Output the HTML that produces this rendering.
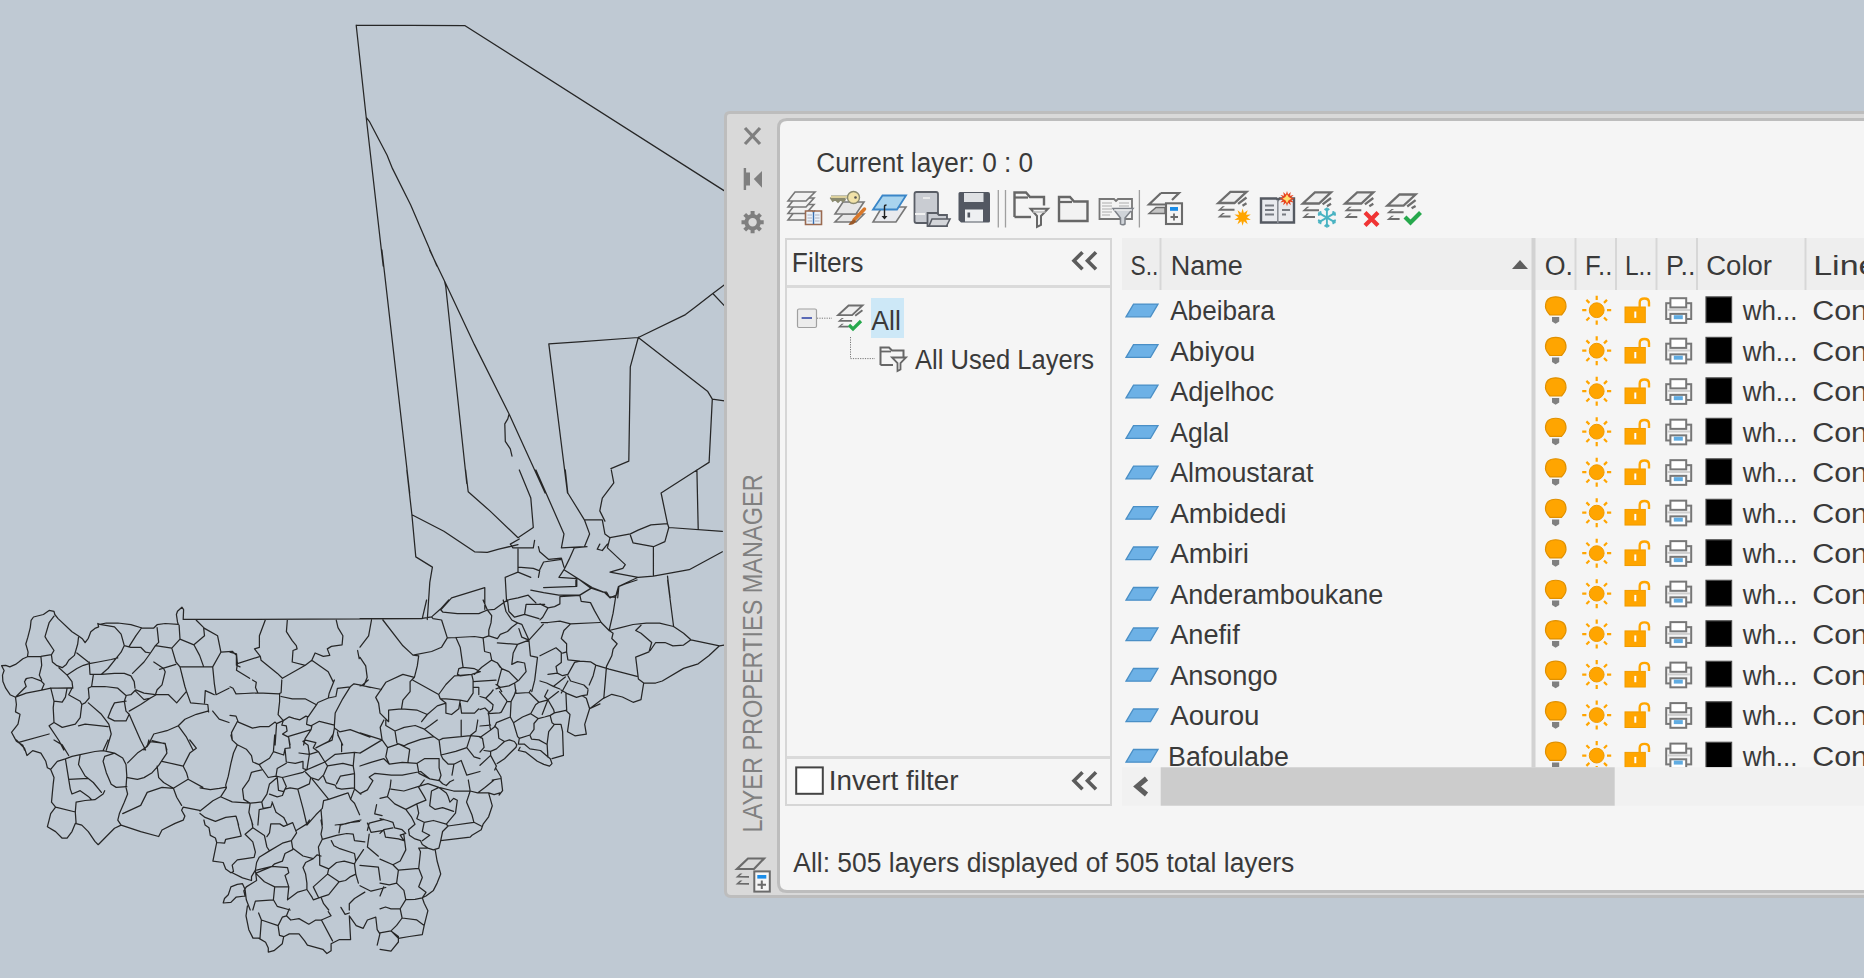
<!DOCTYPE html><html><head><meta charset="utf-8"><style>html,body{margin:0;padding:0;width:1864px;height:978px;overflow:hidden;background:#bfc9d3}svg text{font-family:"Liberation Sans",sans-serif}</style></head><body><svg width="1864" height="978" viewBox="0 0 1864 978" style="position:absolute;left:0;top:0">
<rect width="1864" height="978" fill="#bfc9d3"/>
<g fill="none" stroke="#262626" stroke-width="1.25" stroke-linejoin="round" stroke-linecap="round">
<path d="M240.0,619.4 183.2,619.4 183.6,609.6 181.9,607.2 177.5,611.3 176.4,614.5 177.5,621.9 178.3,624.4 M178.3,624.4 165.2,623.5 157.1,624.7 153.8,628.0 142.0,628.0 130.9,624.7 117.8,623.0 106.3,623.0 99.8,624.4 97.8,623.5 98.7,626.8 94.9,628.4 90.8,631.7 88.3,638.3 85.1,642.7 82.6,639.1 79.3,636.6 72.0,631.7 58.1,618.6 54.8,614.5 54.0,611.3 49.1,610.4 43.4,614.5 33.5,617.0 31.1,620.3 30.3,627.6 27.8,637.4 25.8,644.0 27.0,648.1 28.1,652.2 27.5,656.7 22.9,658.7 18.8,662.0 15.5,664.4 9.8,666.9 5.7,665.3 1.6,665.6 2.9,668.2 4.1,670.5 2.5,675.1 2.9,681.6 5.7,688.2 10.1,694.7 15.5,697.2 16.4,704.5 15.5,711.9 20.0,714.3 18.0,724.2 15.5,727.4 11.5,732.3 14.7,738.1 16.4,741.3 22.9,745.4 24.5,750.0 M27.5,656.7 40.9,656.3 51.5,654.6 54.0,650.5 47.4,640.7 45.0,636.6 49.1,622.7 54.0,616.2 M51.5,655.4 52.4,662.0 56.4,665.3 62.2,667.7 66.3,664.4 68.7,660.3 74.4,655.4 77.7,644.0 78.5,637.4 M40.9,656.3 41.7,665.3 39.3,675.1 41.7,680.0 M15.5,697.2 26.2,693.1 41.7,690.1 50.7,688.2 57.3,688.2 72.0,687.8 M25.4,679.2 27.0,678.3 31.9,677.5 40.9,680.8 44.2,684.1 41.7,689.8 M26.2,679.2 24.5,681.6 26.2,686.5 22.9,689.8 16.4,696.3 M58.9,667.7 67.1,675.1 72.0,681.6 72.8,688.2 M72.0,688.2 68.7,694.7 71.2,696.3 80.2,701.2 81.8,704.5 M50.7,687.8 52.4,694.7 54.0,701.2 53.2,707.8 54.0,722.5 49.1,725.8 M54.0,701.2 62.2,702.1 65.4,697.2 67.1,688.2 M67.1,675.1 76.9,668.5 83.4,665.3 89.2,663.6 M89.2,662.0 90.0,674.3 M89.2,663.6 98.2,662.0 111.2,659.5 117.8,657.9 M76.9,653.0 88.3,662.0 M90.0,674.3 101.4,674.3 114.5,673.4 124.3,673.4 130.9,675.9 134.2,681.6 135.0,688.2 M101.4,674.3 108.0,668.5 114.5,660.3 121.1,652.2 124.3,645.6 M124.3,645.6 130.9,647.3 140.7,647.3 145.6,652.2 150.5,653.0 M124.3,645.6 121.1,634.2 114.5,626.8 99.8,624.4 M129.2,646.4 135.8,635.8 141.5,628.0 M150.5,653.0 155.4,645.6 158.7,642.4 157.1,627.6 M155.4,645.6 171.8,648.1 180.0,639.1 179.1,625.2 M150.5,653.0 144.0,662.0 132.5,673.4 M153.8,662.0 163.6,668.5 165.2,671.8 162.0,684.9 157.1,689.8 155.4,694.7 M180.0,639.1 193.9,644.8 204.5,635.8 203.7,628.4 M193.9,644.8 199.6,655.4 203.7,666.9 M180.0,666.9 203.7,666.9 212.7,666.9 M171.8,648.1 175.9,662.0 180.0,666.9 M159.5,669.3 175.9,664.4 M180.0,666.9 184.9,686.5 186.5,691.4 190.6,702.9 207.8,704.5 208.6,711.9 M212.7,666.9 220.9,652.2 217.6,635.8 204.5,628.4 196.3,620.3 M220.9,652.2 232.3,651.3 236.4,655.4 236.4,665.3 240.0,666.9 M212.7,666.9 214.3,683.3 216.0,694.7 229.0,688.2 M214.3,694.7 211.0,693.1 205.3,690.6 204.5,702.9 M212.7,711.1 219.2,719.2 229.0,722.5 M186.5,691.4 176.7,702.9 168.5,694.7 156.2,694.7 150.5,698.0 144.0,699.6 135.8,691.4 M155.4,694.7 144.0,693.1 135.8,689.8 130.9,694.7 126.0,695.5 117.8,688.2 104.7,686.5 91.6,686.5 88.3,688.2 M91.6,686.5 93.3,675.1 M88.3,688.2 89.2,698.0 85.1,702.9 81.8,704.5 M126.0,696.3 124.3,701.2 126.0,711.1 129.2,714.3 M126.0,701.2 114.5,702.9 111.2,709.4 108.0,717.6 114.5,720.9 126.0,720.9 129.2,714.3 M129.2,711.1 140.7,704.5 150.5,698.0 M129.2,714.3 134.2,725.8 140.7,740.5 145.6,750.0 M88.3,702.9 101.4,714.3 108.8,724.2 111.2,734.0 106.3,750.0 M78.5,725.8 85.1,724.2 108.0,726.6 M54.0,722.5 62.2,727.4 75.3,724.2 80.2,717.6 81.8,704.5 M49.1,725.8 58.9,740.5 63.8,750.0 M19.6,742.1 49.1,734.0 M178.3,725.8 184.9,719.2 196.3,714.3 207.8,711.1 M178.3,725.8 166.9,730.7 153.8,734.0 150.5,740.5 144.0,750.0 M178.3,725.8 186.5,737.2 193.0,750.0 M152.1,740.5 165.2,743.8 166.9,750.0 M240.0,619.4 422.2,618.6 M357.6,650.5 359.2,658.7 M336.3,620.3 338.0,627.6 342.9,635.8 342.1,644.8 331.4,646.4 327.3,648.9 329.8,655.4 323.3,656.3 315.1,653.0 311.8,660.3 305.3,665.3 292.2,662.0 293.0,650.5 297.1,648.9 296.3,645.6 292.2,640.7 286.4,631.7 287.3,620.3 M265.2,620.3 259.4,635.8 259.4,647.3 254.5,648.9 260.3,656.3 261.1,660.3 277.4,673.4 282.4,678.3 M260.3,656.3 237.4,663.6 M230.0,652.2 236.5,653.8 237.4,663.6 236.5,670.2 249.6,678.3 M282.4,678.3 305.3,665.3 M311.8,660.3 328.2,671.8 333.1,681.6 M16.4,740.0 24.5,748.2 27.0,755.5 32.7,750.6 40.9,753.1 45.8,761.3 47.4,767.8 50.7,769.4 54.0,777.6 53.2,784.2 52.4,792.4 51.5,802.2 55.6,807.1 50.7,813.6 49.1,820.2 47.4,826.7 55.6,831.6 62.2,838.2 67.1,838.2 72.0,831.6 75.3,823.4 81.8,825.1 88.3,831.6 94.9,841.4 98.2,844.7 106.3,836.5 114.5,828.3 121.1,825.1 140.7,831.6 158.7,836.5 162.0,830.0 175.1,823.4 183.2,820.2 184.9,816.1 181.6,810.3 183.2,807.1 199.6,810.3 M50.7,769.4 57.3,761.3 65.4,758.8 72.0,756.4 80.2,754.7 94.9,751.5 103.1,750.6 114.5,753.1 122.7,758.0 126.0,764.5 126.8,776.0 126.0,787.4 127.6,794.0 124.3,802.2 119.4,813.6 117.8,820.2 121.1,825.1 M103.1,750.6 108.0,740.0 M65.4,758.8 67.1,769.4 68.7,779.3 70.3,789.1 72.0,794.0 80.2,790.7 88.3,796.4 91.6,799.7 M54.0,740.0 62.2,744.9 68.7,755.5 M80.2,754.7 78.5,764.5 85.1,776.0 93.3,782.5 101.4,792.4 M68.7,779.3 88.3,778.4 M114.5,753.1 104.7,756.4 103.1,761.3 106.3,772.7 111.2,784.2 116.2,787.4 126.8,786.6 M76.1,802.2 85.1,800.5 94.9,799.7 103.1,794.0 104.7,790.7 M76.1,802.2 75.3,812.0 76.1,823.4 M55.6,807.1 75.3,812.0 M127.6,762.9 137.4,753.1 147.2,746.5 148.9,740.0 M147.2,746.5 150.5,741.6 165.2,743.3 166.9,753.1 162.0,760.4 158.7,765.4 152.1,772.7 144.0,777.6 137.4,779.3 127.6,777.6 M162.0,761.3 183.2,766.2 186.5,772.7 188.1,778.4 M183.2,766.2 186.5,759.6 189.8,753.1 196.3,748.2 189.8,740.0 M157.1,766.2 158.7,777.6 163.6,782.5 173.4,788.3 M122.7,813.6 140.7,805.4 147.2,792.4 162.0,787.4 173.4,788.3 188.1,779.3 202.9,787.4 M173.4,788.3 176.7,797.3 181.6,805.4 M247.4,906.0 246.0,915.8 248.8,929.7 253.0,938.1 258.6,938.1 265.6,942.3 268.3,947.9 268.3,952.1 273.9,950.7 282.3,943.7 283.7,936.7 289.3,933.9 299.0,933.9 304.6,940.9 307.4,945.1 322.8,949.3 326.9,953.5 331.1,950.7 331.1,943.7 339.5,939.5 350.6,939.5 349.3,915.8 356.2,925.6 363.2,928.3 367.4,920.0 375.8,917.2 377.2,929.7 379.9,933.9 377.2,945.1 M289.3,908.8 286.5,915.8 282.3,917.2 278.1,925.6 279.5,935.3 283.7,936.7 M258.6,913.0 261.4,920.0 278.1,925.6 M261.4,920.0 260.0,938.1 M286.5,915.8 290.7,920.0 299.0,918.6 308.8,924.2 315.8,920.0 321.4,920.0 331.1,915.8 328.3,911.6 M340.9,907.4 345.1,914.4 349.3,913.0 M321.4,920.0 332.5,940.9 M356.2,25.2 465.1,25.7 724.0,190.6 M356.2,25.2 366.2,117.3 383.2,266.0 M366.2,117.3 369.3,121.3 387.1,155.3 392.4,168.4 410.7,205.0 436.9,266.0 M381.9,250.0 409.7,493.0 M429.6,250.0 444.5,281.1 474.3,344.4 509.1,414.0 545.1,493.0 M444.5,281.1 445.7,286.0 466.8,483.5 M509.1,414.0 507.8,418.9 504.8,423.9 505.3,441.3 510.3,448.8 512.0,456.2 M548.8,343.9 578.6,341.9 638.3,337.5 M548.8,343.9 567.5,493.0 M638.3,337.5 685.5,314.6 695.4,307.1 712.8,293.5 724.5,284.8 M712.8,293.5 724.5,305.9 M638.3,337.5 630.3,366.8 628.8,461.2 610.9,468.6 M638.3,337.5 707.8,391.6 712.3,399.1 724.5,400.8 M712.3,399.1 709.1,462.4 M360.0,618.6 422.3,618.3 M426.6,600.0 422.3,618.3 M422.3,618.3 431.6,616.9 433.0,618.6 441.6,620.0 447.3,637.9 M431.6,616.9 440.2,609.3 448.8,600.0 M440.2,609.3 443.0,612.2 457.4,613.6 478.8,613.6 487.4,610.0 M487.4,610.0 483.1,600.0 M487.4,610.0 494.6,609.3 503.2,602.9 507.5,600.0 M487.4,610.0 491.7,615.7 491.0,622.9 488.8,630.1 488.8,635.8 483.1,637.9 474.5,636.5 455.9,637.5 447.3,637.9 M447.3,637.9 441.6,647.2 431.6,651.5 413.0,655.1 402.9,645.8 382.9,620.0 M371.5,620.0 368.6,635.8 360.0,647.2 M360.0,657.3 365.7,665.9 367.2,677.3 364.3,684.5 360.0,685.9 M360.0,685.2 381.5,689.5 M413.0,655.1 418.7,655.8 417.3,665.9 414.4,677.3 M414.4,677.3 402.9,674.4 385.8,682.3 381.5,688.8 375.7,697.4 378.6,703.1 380.0,713.1 388.6,721.7 M414.4,677.3 410.1,681.6 410.1,691.6 402.9,700.2 401.5,708.8 M413.0,680.2 438.7,694.5 M455.9,637.5 460.2,647.2 463.1,667.3 M463.1,667.3 458.8,668.7 457.4,674.4 460.2,675.9 471.7,674.4 480.3,671.6 474.5,668.7 463.1,667.3 M438.7,694.5 445.9,684.5 454.5,675.9 471.7,674.4 473.1,680.2 473.1,693.1 467.4,701.6 460.2,700.2 445.9,698.8 440.2,698.8 438.7,694.5 M483.1,637.9 484.6,651.5 490.3,653.0 491.7,660.1 497.4,663.0 500.3,667.3 M491.7,660.1 481.7,667.3 474.5,674.4 M473.1,681.6 496.0,680.2 M473.1,687.3 478.8,687.3 478.8,694.5 M497.4,663.0 501.7,668.7 497.4,684.5 501.7,691.6 M488.8,635.8 497.4,638.7 500.3,634.4 507.5,631.5 511.8,627.2 517.5,622.9 521.8,624.3 528.9,640.1 517.5,644.4 497.4,642.9 M528.9,640.1 543.2,624.3 M528.9,640.1 530.4,655.8 537.5,657.3 534.7,680.2 531.8,691.6 M517.5,644.4 513.2,653.0 511.8,664.4 517.5,661.6 524.6,663.0 526.1,671.6 518.9,680.2 514.6,683.0 516.0,693.1 M501.7,668.7 508.9,671.6 517.5,680.2 M496.0,684.5 500.3,687.3 508.9,685.9 514.6,683.0 M496.0,688.8 500.3,687.3 M503.2,600.0 506.0,611.5 511.8,620.0 517.5,622.9 M507.5,600.0 508.9,611.5 514.6,617.2 524.6,614.3 539.0,618.6 M524.6,614.3 526.1,604.3 544.7,604.3 M518.9,628.6 521.8,637.2 528.9,640.1 M440.2,698.8 445.9,703.1 445.9,713.1 451.6,714.5 458.8,708.8 460.2,700.2 M460.2,703.1 461.6,713.1 474.5,713.1 478.8,708.8 M401.5,708.8 417.3,710.2 427.3,714.5 421.6,721.7 M401.5,708.8 388.6,710.2 388.6,721.7 M427.3,714.5 437.3,705.9 445.9,703.1 M667.6,580.0 673.6,626.5 M673.6,626.5 683.6,633.2 690.9,639.8 719.5,645.8 724.0,645.1 M719.5,645.8 708.8,655.8 698.2,663.8 683.6,668.4 662.3,681.0 655.7,683.0 643.7,683.0 638.4,679.0 635.7,657.1 649.0,651.8 651.7,642.5 641.0,633.2 635.7,630.5 641.0,625.2 M690.9,639.8 683.6,645.1 672.9,645.8 665.0,642.5 655.7,642.5 650.3,650.5 M609.1,630.5 619.8,627.9 633.1,624.5 646.4,623.2 659.6,623.2 673.6,626.5 M618.4,586.6 625.1,584.0 637.0,580.0 M618.4,586.6 615.8,596.0 613.1,613.2 609.1,630.5 M615.8,597.3 609.1,596.6 606.5,592.0 602.5,592.0 590.5,588.0 579.9,580.0 M559.9,596.6 579.9,595.3 590.5,588.6 M579.9,595.3 581.2,601.3 590.5,602.6 594.5,610.6 601.2,622.5 609.1,630.5 M559.9,596.6 559.9,603.9 554.6,606.6 548.0,607.9 540.0,603.9 M548.0,607.9 542.7,617.2 540.0,619.9 M541.3,622.5 548.0,622.5 559.9,621.2 570.6,623.9 599.8,622.5 M570.6,623.9 563.9,630.5 561.3,638.5 566.6,643.8 566.6,651.8 562.6,653.1 M566.6,651.8 567.9,659.8 579.9,661.1 590.5,661.8 595.8,665.1 609.1,669.1 637.0,676.4 M609.1,630.5 613.1,633.2 611.8,638.5 617.1,643.8 613.1,649.1 611.8,655.8 606.5,666.4 603.8,698.3 M603.8,698.3 611.8,694.3 622.4,697.0 633.1,702.3 641.0,699.6 643.7,683.0 M595.8,665.1 593.2,675.7 589.2,685.0 M540.0,655.8 556.0,647.8 561.3,652.5 M561.3,653.1 561.3,662.4 556.0,666.4 557.3,673.1 562.6,675.7 567.9,674.4 M567.9,674.4 574.6,662.4 579.9,661.1 M567.9,675.7 570.6,681.0 583.9,685.0 587.9,689.0 M548.0,674.4 557.3,673.1 M540.0,681.0 546.6,683.0 553.3,686.4 559.9,689.0 M553.3,686.4 565.3,677.0 M561.3,693.0 567.9,681.0 M575.9,586.0 575.9,580.0 M406.8,470.0 411.9,514.7 415.8,556.9 432.4,567.1 429.8,582.4 M411.9,514.7 443.9,531.3 474.6,551.8 487.3,552.3 498.8,549.2 518.0,544.6 M465.6,470.0 468.2,491.7 489.9,510.9 518.0,537.7 533.3,527.5 530.8,498.1 519.3,470.0 M519.3,539.0 510.3,544.1 512.9,547.9 533.3,547.9 534.6,540.3 M535.9,470.0 564.0,533.9 561.4,547.9 584.4,546.7 589.6,533.9 584.4,519.8 602.3,519.8 604.9,533.9 610.0,537.7 M565.3,470.0 567.8,493.0 584.4,519.8 M611.3,470.0 613.8,482.8 602.3,498.1 599.8,510.9 604.9,521.1 M610.0,537.7 630.4,533.9 638.1,530.1 650.9,524.9 667.5,523.7 668.8,527.5 722.4,531.3 M696.9,470.0 661.1,493.0 667.5,523.7 M696.9,470.0 698.2,528.8 M630.4,535.2 633.0,542.8 653.4,546.7 664.9,541.6 668.8,527.5 M653.4,546.7 653.4,576.1 M722.4,551.8 689.2,569.7 653.4,576.1 638.1,577.3 610.0,572.2 622.8,568.4 625.3,564.6 607.4,547.9 610.0,537.7 M599.8,544.1 597.2,549.2 602.3,550.5 607.4,544.1 M587.0,546.7 574.2,547.9 569.1,559.4 564.0,569.7 M538.4,546.7 539.7,551.8 548.7,559.4 561.4,558.2 564.0,567.1 M518.0,549.2 518.0,572.2 530.8,577.3 M518.0,567.1 533.3,568.4 539.7,570.9 538.4,577.3 M539.7,569.7 543.6,562.0 561.4,559.4 M564.0,569.7 558.9,577.3 576.8,578.6 576.8,586.3 543.6,587.6 M564.0,569.7 592.1,587.6 604.9,592.7 610.0,597.8 616.4,595.2 618.9,586.3 638.1,577.3 M518.0,572.2 505.2,577.3 M618.9,586.3 617.7,597.8 M667.5,576.1 670.1,597.8 M484.8,587.6 451.6,597.8 441.3,609.3 M484.8,587.6 484.8,609.3 M505.2,577.3 506.5,600.3 M506.5,600.3 518.0,597.8 528.2,595.2 M528.2,595.2 535.9,602.9 M530.8,590.1 543.6,592.7 558.9,595.2 579.3,595.2 592.1,587.6 M429.8,582.4 427.3,619.5 M230.9,735.0 232.2,740.1 237.3,744.7 233.5,753.0 230.9,763.3 228.3,776.2 225.7,785.2 226.4,787.8 220.6,796.8 212.9,800.7 200.0,811.0 M200.0,787.8 210.3,789.7 219.3,788.4 226.4,787.1 M237.3,744.7 246.3,749.2 251.5,755.6 252.8,762.0 259.2,764.6 261.8,768.5 268.2,777.5 276.0,776.2 M259.2,764.6 269.5,758.2 273.4,751.7 274.7,735.0 M273.4,751.7 283.7,755.0 285.0,748.5 290.1,747.9 288.8,738.9 M285.0,748.5 286.3,762.0 295.3,763.3 303.0,761.4 303.0,768.5 306.9,769.8 M276.0,776.2 277.2,768.5 286.3,763.3 M276.0,776.2 282.4,777.5 303.0,772.3 306.9,769.8 315.9,765.9 324.9,762.0 M261.8,769.8 251.5,772.3 248.9,780.1 242.5,789.1 243.8,799.4 250.2,803.2 261.8,801.9 266.9,794.2 269.5,783.9 277.2,777.5 M220.6,796.8 232.2,801.9 250.2,803.2 M250.2,803.2 248.9,812.2 252.8,825.0 M277.2,777.5 278.5,790.4 283.7,791.6 286.3,786.5 282.4,777.5 M283.7,791.6 285.0,789.1 290.1,787.8 297.8,789.1 309.4,783.9 310.7,777.5 305.6,772.3 M297.8,789.1 303.0,808.4 306.9,825.0 M261.8,801.9 263.1,808.4 270.8,807.1 272.1,803.2 M272.1,801.9 276.0,812.2 283.7,817.4 287.5,825.0 M269.5,794.2 277.2,796.8 282.4,795.5 285.0,789.1 M257.9,825.0 259.2,809.7 270.8,807.1 M306.9,769.8 309.4,754.3 308.1,745.3 303.0,741.4 M299.1,753.0 309.4,754.3 318.4,751.7 M303.0,741.4 305.6,740.1 315.9,742.7 313.3,747.9 318.4,751.7 M315.9,747.9 328.7,741.4 332.6,735.0 M318.4,751.7 324.9,762.0 327.5,765.9 323.6,774.9 318.4,780.1 310.7,777.5 M324.9,762.0 335.2,754.3 354.5,752.4 359.6,753.0 M337.8,735.0 341.6,742.7 341.6,751.7 M354.5,752.4 353.2,765.9 354.5,773.6 354.5,789.1 360.9,794.2 M327.5,765.9 342.9,763.3 353.2,765.9 M323.6,776.2 326.2,782.6 335.2,785.2 336.5,787.8 341.6,789.1 354.5,787.8 M336.5,783.9 340.3,776.2 354.5,773.6 M312.0,778.8 328.7,799.4 344.2,794.2 348.1,792.9 350.6,799.4 354.5,803.2 359.6,814.8 M328.7,799.4 323.6,800.7 322.3,808.4 315.9,814.8 306.9,825.0 M321.0,809.7 322.3,825.0 M354.5,789.1 350.6,799.4 M200.0,813.5 205.1,817.4 215.4,821.3 225.7,817.4 236.0,816.1 238.6,825.0 M335.2,825.0 345.5,823.8 354.5,821.3 360.9,820.0 M203.9,820.0 205.1,825.1 209.0,827.7 210.3,835.4 215.4,838.0 216.7,842.5 224.5,843.2 225.7,839.3 241.2,836.1 238.6,826.4 237.3,820.0 M216.7,842.5 212.9,861.2 223.2,862.5 225.7,868.9 230.9,872.8 233.5,871.5 232.2,865.1 237.3,859.9 254.1,857.3 255.4,852.2 252.8,841.9 245.1,834.2 252.8,827.7 251.5,820.0 M252.8,827.7 264.4,835.4 266.9,847.0 269.5,850.9 259.2,857.3 256.6,862.5 255.4,870.2 251.5,876.6 251.5,880.5 242.5,877.9 232.2,872.8 M269.5,850.9 282.4,843.2 291.4,840.6 296.6,832.9 292.7,822.6 283.7,826.4 279.8,823.9 270.8,823.9 269.5,832.9 266.9,836.7 M296.6,830.3 306.9,823.9 309.4,820.0 M291.4,840.6 292.7,848.3 303.0,856.0 313.3,858.6 317.2,854.8 321.0,856.0 M292.7,849.6 285.0,853.5 282.4,861.2 274.7,863.8 272.1,866.3 256.6,870.2 M256.6,872.8 272.1,866.3 287.5,867.6 288.8,872.8 285.0,875.4 288.8,886.9 287.5,899.8 M256.6,874.1 264.4,881.8 274.7,886.9 288.8,886.9 M255.4,870.2 256.6,880.5 246.3,886.9 243.8,890.8 245.1,896.0 M245.1,889.5 242.5,883.7 237.3,884.4 230.9,886.9 228.3,894.7 224.5,898.5 223.2,903.0 230.9,902.4 236.0,897.2 245.1,896.0 M245.1,889.5 246.3,899.8 250.2,910.0 M252.8,910.0 255.4,901.1 273.4,899.8 274.7,886.9 M273.4,899.8 277.2,906.3 290.1,910.0 M287.5,899.8 297.8,892.1 306.9,889.5 312.0,897.2 313.3,899.8 321.0,897.2 M313.3,858.6 305.6,862.5 303.0,867.6 305.6,874.1 306.9,883.1 306.9,889.5 M321.0,820.0 322.3,827.7 321.0,834.2 322.3,839.3 318.4,847.0 319.7,857.3 319.7,865.1 328.7,868.9 M322.3,839.3 336.5,835.4 346.8,833.5 353.2,834.2 354.5,840.6 364.8,841.9 M363.5,849.6 355.8,861.2 354.5,863.8 M331.3,840.6 333.9,845.7 339.0,848.3 354.5,853.5 355.8,861.2 M328.7,868.9 327.5,874.1 313.3,886.9 318.4,897.2 M327.5,874.1 339.0,881.8 345.5,880.5 350.6,876.6 355.8,874.1 354.5,863.8 344.2,861.2 336.5,862.5 328.7,868.9 M321.0,897.2 328.7,894.7 339.0,881.8 M321.0,897.2 323.6,903.7 328.7,910.0 M355.8,874.1 358.4,883.1 M364.8,892.1 354.5,898.5 349.3,903.7 349.3,910.0 M339.0,832.9 340.3,825.1 349.3,822.6 359.6,821.3 M495.7,768.0 500.9,776.7 502.6,790.7 499.1,795.0 M492.2,780.2 500.9,778.5 M480.0,696.5 485.7,698.2 493.1,704.7 492.3,709.6 488.2,712.9 489.0,716.2 489.8,726.0 490.6,730.1 M485.7,698.2 490.6,693.3 493.1,690.0 M499.6,691.6 506.2,699.8 507.0,701.5 511.1,701.5 M507.0,701.5 501.3,712.1 499.6,712.9 488.2,713.7 M511.1,701.5 514.4,694.9 516.0,690.0 M516.0,693.3 529.1,692.5 530.7,690.0 M529.1,692.5 538.9,702.3 M511.1,701.5 510.3,717.0 513.5,722.7 517.6,736.6 519.3,738.3 518.4,744.0 M480.0,726.0 490.6,725.2 M480.0,709.6 484.9,708.0 488.2,711.3 M510.3,717.0 496.4,722.7 494.7,726.8 490.6,730.1 480.0,737.4 M494.7,726.0 498.0,729.3 498.8,738.3 504.5,741.5 M513.5,722.7 522.5,717.0 530.7,713.7 538.1,718.6 M530.7,713.7 535.6,704.7 538.9,702.3 547.9,699.8 M547.9,699.8 558.5,691.6 M547.9,699.8 544.6,696.5 547.9,690.0 M547.9,699.8 542.2,714.5 M547.9,699.8 553.6,709.6 554.4,712.9 565.9,710.4 M538.1,718.6 544.6,717.0 550.3,715.4 554.4,712.9 M538.1,718.6 534.0,723.5 534.0,729.3 529.9,735.0 519.3,738.3 M529.9,735.0 531.5,739.1 538.9,739.9 546.3,744.0 M550.3,716.2 552.0,722.7 554.4,724.4 548.7,731.7 547.1,744.0 547.9,757.1 M554.4,724.4 561.0,724.4 562.6,731.7 563.4,755.4 552.0,758.7 M565.9,710.4 570.0,714.5 567.5,731.7 574.9,735.8 586.3,734.2 584.7,724.4 589.6,708.8 586.3,698.2 582.2,695.7 576.5,697.4 566.7,693.3 561.0,690.0 M565.9,693.3 566.7,710.4 M589.6,708.8 600.0,703.9 M582.2,695.7 587.2,694.9 588.0,690.0 M480.0,737.4 482.5,738.3 484.1,747.3 480.0,752.2 M484.1,750.5 490.6,751.3 496.4,748.9 504.5,741.5 509.4,739.9 514.4,741.5 516.8,744.8 M490.6,751.3 490.6,755.4 496.4,766.1 494.7,770.0 M490.6,755.4 480.0,765.3 M516.8,744.8 516.0,747.3 509.4,753.8 504.5,758.7 497.2,763.6 M519.3,744.0 524.2,744.0 529.9,748.9 540.5,750.5 546.3,755.4 550.3,758.7 552.0,763.6 549.5,766.1 543.8,764.4 537.3,761.2 525.8,752.2 518.4,750.5 520.1,747.3 M709.0,462.4 697.0,470.0 M360.0,732.9 382.1,739.9 M360.0,753.1 382.1,739.9 M382.1,739.9 380.2,727.4 383.9,720.0 M382.1,739.9 387.6,747.6 385.8,756.8 389.4,764.2 M360.0,766.0 371.0,762.3 383.9,758.7 389.4,764.2 M389.4,764.2 402.3,762.3 417.1,763.3 424.4,758.7 439.1,758.7 M387.6,747.6 398.7,743.9 404.2,745.8 407.9,743.9 420.7,739.3 433.6,736.6 439.1,740.2 441.0,755.0 442.8,758.7 M396.8,743.0 409.7,749.4 407.9,762.3 M385.8,720.0 385.8,725.5 395.0,731.0 396.8,742.1 M395.0,731.0 404.2,727.4 415.2,725.5 424.4,729.2 433.6,736.6 M424.4,729.2 429.9,725.5 437.3,720.0 M439.1,740.2 442.8,738.4 461.2,736.6 470.4,735.6 480.0,736.6 M461.2,736.6 461.2,720.0 M470.4,735.6 476.0,731.0 477.8,720.0 M466.8,747.6 474.1,756.8 480.0,758.7 M441.0,755.0 455.7,751.3 466.8,747.6 470.4,736.6 M442.8,758.7 448.3,764.2 453.9,764.2 452.0,775.2 M453.9,764.2 461.2,760.5 466.8,775.2 M466.8,775.2 480.0,771.5 M417.1,763.3 418.9,773.4 429.9,778.9 439.1,780.7 441.0,775.2 439.1,767.9 439.1,758.7 M360.0,793.6 367.4,789.9 372.9,780.7 369.2,777.1 374.7,773.4 391.3,775.2 M391.3,775.2 402.3,775.2 420.7,771.5 429.9,778.9 M376.6,804.7 374.7,813.9 382.1,815.7 M383.9,819.4 369.2,823.1 367.4,830.4 M367.4,823.1 371.0,832.3 383.9,830.4 M369.2,834.1 367.4,847.0 378.4,856.2 M360.0,865.4 378.4,867.2 M378.4,867.2 380.2,880.1 M360.0,885.7 371.0,891.2 385.8,887.5 M391.0,780.0 390.1,787.4 387.4,796.6 380.0,798.4 M387.4,796.6 394.7,803.9 405.8,809.4 416.8,803.9 426.0,800.2 424.2,796.6 418.7,787.4 424.2,780.0 M391.0,789.2 403.9,791.0 418.7,786.4 M418.7,786.4 427.9,783.7 438.9,787.4 453.6,791.0 470.2,791.0 468.3,780.0 M438.9,780.0 442.6,783.7 446.3,785.5 449.9,781.8 453.6,780.0 M470.2,791.0 477.6,792.9 488.6,792.9 494.1,794.7 500.0,792.9 M477.6,792.9 484.9,787.4 494.1,780.0 M488.6,792.9 492.3,805.8 488.6,816.8 483.1,824.2 481.2,829.7 472.0,835.2 470.2,837.1 440.7,840.7 438.9,848.1 433.4,849.9 427.9,848.1 422.3,844.4 420.5,840.7 415.0,838.9 409.4,835.2 408.5,829.7 415.0,824.2 411.3,816.8 405.8,809.4 M426.0,800.2 416.8,803.9 418.7,813.1 416.8,818.7 424.2,822.3 433.4,820.5 446.3,824.2 455.5,813.1 457.3,800.2 453.6,798.4 449.9,802.1 448.1,796.6 446.3,792.9 438.9,787.4 431.5,791.0 429.7,805.8 435.2,809.4 442.6,807.6 453.6,811.3 M470.2,791.0 466.5,802.1 472.0,815.0 473.9,822.3 481.2,826.0 M473.9,822.3 448.1,826.0 446.3,824.2 M424.2,822.3 422.3,831.5 429.7,835.2 422.3,840.7 M448.1,826.0 442.6,831.5 440.7,840.7 M380.0,818.7 387.4,820.5 392.9,822.3 394.7,827.9 402.1,829.7 405.8,833.4 400.2,835.2 403.9,840.7 M380.0,833.4 383.7,829.7 392.9,827.9 M383.7,829.7 385.5,837.1 398.4,838.9 403.9,840.7 M403.9,835.2 405.8,849.9 400.2,861.0 392.9,864.7 380.0,859.1 M392.9,864.7 398.4,870.2 418.7,868.3 420.5,851.8 418.7,848.1 427.9,848.1 M398.4,870.2 396.6,883.1 403.9,890.4 405.8,899.6 400.2,908.8 M418.7,868.3 422.3,877.6 418.7,886.8 426.0,892.3 422.3,897.8 M435.2,849.9 437.1,861.0 440.7,873.9 437.1,883.1 433.4,890.4 426.0,896.0 422.3,897.8 M380.0,883.1 389.2,884.9 396.6,883.1 M383.7,886.8 380.0,896.0 M405.8,899.6 415.0,899.3 422.3,897.8 424.2,903.3 427.9,910.7 424.2,925.4 422.3,934.6 409.4,936.5 398.4,938.3 391.0,930.9 M380.0,908.8 385.5,907.0 391.0,908.8 400.2,908.8 402.1,918.0 416.8,919.9 424.2,925.4 M402.1,918.0 396.6,925.4 391.0,930.9 380.0,932.8 M391.0,930.9 398.4,936.5 398.4,942.0 391.0,951.2 380.0,949.3 M230.0,686.8 233.0,688.3 236.0,693.9 245.0,693.5 257.8,692.8 278.8,693.9 281.1,692.8 281.8,680.0 M252.5,680.0 256.3,682.3 255.5,687.5 257.8,692.8 M279.6,693.9 279.6,701.8 278.1,714.6 283.3,720.6 M281.1,696.5 292.3,698.8 305.1,698.8 316.4,704.8 317.9,702.5 328.4,698.0 335.9,696.5 337.4,688.3 350.2,686.8 353.9,683.8 362.2,685.3 368.2,680.0 M350.2,686.8 342.7,698.8 335.2,713.0 334.4,725.1 334.4,728.1 M328.4,697.3 329.1,693.5 334.4,680.0 M362.2,685.3 370.0,687.5 M316.4,704.8 308.1,716.8 305.9,716.1 299.9,719.8 293.8,718.3 289.3,716.8 283.3,720.6 276.6,723.6 M307.4,717.6 306.6,724.3 311.1,725.8 319.4,721.3 334.4,725.1 M230.0,715.3 236.0,716.1 238.3,722.1 252.5,728.1 260.0,726.6 269.1,726.6 275.1,722.1 276.6,723.6 M237.5,721.3 231.5,732.6 232.3,740.1 237.5,745.0 M276.6,723.6 275.1,745.0 M283.3,720.6 281.8,725.1 286.3,725.8 287.1,731.1 282.6,734.1 288.6,737.1 290.1,745.0 M288.6,736.3 311.1,729.6 311.9,725.8 M311.1,729.6 305.1,738.6 303.6,745.0 M334.4,728.1 339.7,731.8 350.2,729.6 370.0,737.1 M334.4,728.1 332.1,740.1 321.6,745.0 M337.4,731.8 338.2,735.6 342.7,745.0 M604.4,697.5 590.0,708.4"/>
</g>
<path d="M1870 112.5 H730 Q725.5 112.5 725.5 117 V891 Q725.5 896.5 731 896.5 H1870" fill="#d9d9d9" stroke="#bdbdbd" stroke-width="3"/>
<path d="M1870 119.5 H787 Q778.5 119.5 778.5 128 V883 Q778.5 891.5 787 891.5 H1870" fill="#f5f5f5" stroke="#bdbdbd" stroke-width="3"/>
<path d="M745 128 L760 144 M760 128 L745 144" stroke="#7f7f7f" stroke-width="3.2"/>
<rect x="743.7" y="168" width="2.4" height="22" fill="#7f7f7f"/><rect x="745" y="172.5" width="5" height="13" fill="#7f7f7f"/><path d="M753.8 179 L762 171 V187.7 Z" fill="#7f7f7f"/>
<path fill-rule="evenodd" fill="#7f7f7f" d="M763.7 220.2 L763.7 224.2 L760.6 224.2 L759.6 226.4 L761.9 228.7 L759.1 231.5 L756.8 229.2 L754.6 230.2 L754.6 233.3 L750.6 233.3 L750.6 230.2 L748.4 229.2 L746.1 231.5 L743.3 228.7 L745.6 226.4 L744.6 224.2 L741.5 224.2 L741.5 220.2 L744.6 220.2 L745.6 218.0 L743.3 215.7 L746.1 212.9 L748.4 215.2 L750.6 214.2 L750.6 211.1 L754.6 211.1 L754.6 214.2 L756.8 215.2 L759.1 212.9 L761.9 215.7 L759.6 218.0 L760.6 220.2 Z M756.8000000000001 222.2 A4.2 4.2 0 1 0 748.4 222.2 A4.2 4.2 0 1 0 756.8000000000001 222.2 Z"/>
<text transform="translate(762.4 832.4) rotate(-90)" x="0" y="0" font-size="27.5" fill="#808080" textLength="358" lengthAdjust="spacingAndGlyphs">LAYER PROPERTIES MANAGER</text>
<g fill="none" stroke="#6b6b6b" stroke-width="2.2"><path d="M748 858.5 H764 L754 869 H737 Z"/></g><path d="M735.5 877.5 L740 873.5 H742.5 L739.5 876 H749 V877.8 Z M735.5 884.5 L740 880.5 H742.5 L739.5 883 H749 V884.8 Z" fill="#6b6b6b"/>
<rect x="754.3" y="871.4" width="15.5" height="20.2" fill="#f5f5f5" stroke="#6b6b6b" stroke-width="2"/><rect x="757.3" y="875" width="9" height="3.6" fill="#1a8ce8"/><path d="M761.8 880.5 V889 M757.5 884.8 H766" stroke="#6b6b6b" stroke-width="2"/>
<text x="816.3" y="172.0" font-size="27" fill="#3a3a3a" textLength="216.8" lengthAdjust="spacingAndGlyphs" >Current layer: 0 : 0</text>
<g stroke="#777" stroke-width="1.6" fill="#f2f2f2"><path d="M795 211 H814 L806 220 H788 Z"/><path d="M795 204.5 H814 L806 213.5 H788 Z"/><path d="M795 198 H814 L806 207 H788 Z"/><path d="M795 192 H815 L806 201 H788 Z"/></g>
<path d="M805.5 211 H812.5 L813.5 212 L814.5 211 H821.5 V224.5 H805.5 Z" fill="#eaf2fa" stroke="#9a6a50" stroke-width="1.6"/><path d="M813.5 212 V224" stroke="#3a6fb0" stroke-width="1.4"/><path d="M807.5 215 H812 M807.5 218 H812 M807.5 221 H812 M815 215 H819.5 M815 218 H819.5 M815 221 H819.5" stroke="#aab" stroke-width="0.9"/>
<g stroke="#777" stroke-width="1.6" fill="#e6e6e6"><path d="M843 214 H864 L856 222 H835 Z"/><path d="M843 202 H864 L856 214 H835 Z"/></g>
<path d="M831 197 H851 M831 197 L833 200 L835.5 198.5 L838 201 L840.5 198.5 L843 200.5 L845 198.5" fill="none" stroke="#8a8a70" stroke-width="3.2"/><path d="M831 197 H851" stroke="#f1e2a8" stroke-width="1.6"/><circle cx="853.5" cy="197.5" r="6" fill="#f1e2a8" stroke="#8a8a70" stroke-width="1.4"/><circle cx="855.5" cy="197.5" r="1.3" fill="#555"/>
<path d="M864.5 209 L854 220" stroke="#d9782a" stroke-width="3.5" stroke-linecap="round"/><path d="M854.5 219.5 Q851 220 848.5 225 Q854 225 856 221.5 Z" fill="#9a5a2a"/>
<path d="M882 207 H906 L896 222 H873 Z" fill="#e9eaee" stroke="#777" stroke-width="1.6"/><path d="M882.5 195.5 H906 L897 209.5 H873 Z" fill="#a9d4ee" stroke="#3a86c8" stroke-width="1.8"/><path d="M884.5 217 V206.5 Q884.5 205 886.5 205" fill="none" stroke="#222" stroke-width="1.4"/><path d="M881.5 216 L884.5 219.5 L887.5 216 Z" fill="#222"/>
<rect x="914.5" y="192" width="23.5" height="31" rx="2" fill="#c9ccd2" stroke="#5a5e66" stroke-width="1.8"/><path d="M923 198 H930" stroke="#f0f0f0" stroke-width="1.6"/><path d="M915 214 H925" stroke="#f0f0f0" stroke-width="2"/><path d="M927.5 213 H937 L939 215 H947 V226 H927.5 Z" fill="#c9ccd2" stroke="#5a5e66" stroke-width="1.8"/><path d="M929 226 L932 219 H950 L946.5 226 Z" fill="#d4d6da" stroke="#5a5e66" stroke-width="1.6"/>
<path d="M959 192 H988 Q990 192 990 194 V221 Q990 222.5 988.5 222.5 H961 L958.5 220 V193.5 Q958.5 192 960 192 Z" fill="#535862"/><rect x="964" y="193" width="19.5" height="9" fill="#dfe1e4"/><rect x="965" y="209.5" width="18" height="12" fill="#eef0f2"/><rect x="967.5" y="212.5" width="2.6" height="5" fill="#535862"/>
<path d="M998.3 190 V227.5 M1005.5 190 V227.5 M1139.4 190 V227.5" stroke="#9f9f9f" stroke-width="1.3"/>
<path d="M1014.5 217 V192.5 H1026 L1030 197 H1044 V205.5" fill="none" stroke="#676767" stroke-width="2.4"/><path d="M1014.5 197.5 H1028" stroke="#676767" stroke-width="2.2"/><path d="M1014.5 217 H1031" stroke="#676767" stroke-width="2.4"/><path d="M1030.5 208.7 H1048 L1041 216 V225 L1037 227 V216 Z" fill="#f2f2f2" stroke="#676767" stroke-width="2"/><path d="M1033 212 H1045.5" stroke="#bbb" stroke-width="1.5"/>
<path d="M1059 221 V197 H1070 L1074 201.5 H1087.5 V221 Z" fill="#f2f2f2" stroke="#676767" stroke-width="2.4"/><path d="M1059 202 H1072" stroke="#676767" stroke-width="2.2"/>
<path d="M1099.5 199 H1114 L1116 201 L1118 199 H1132 V219 H1099.5 Z" fill="#f4f4f4" stroke="#777" stroke-width="1.8"/><path d="M1102 203 H1112 M1102 206 H1112 M1102 209 H1112 M1102 212 H1112 M1102 215 H1110 M1119 203 H1129 M1119 206 H1129" stroke="#c4c4c4" stroke-width="1.6"/><path d="M1113 208.5 H1133 L1125 218 V224 Q1122.5 225.5 1120.5 224 V218 Z" fill="#cfd3d8" stroke="#7d8188" stroke-width="1.5"/><path d="M1114 210 H1132" stroke="#f4f4f4" stroke-width="1.2"/>
<path d="M1161 193 H1179 L1172 200" fill="none" stroke="#6b6b6b" stroke-width="2.2"/><path d="M1161 193 L1149 204.5 H1165" fill="none" stroke="#6b6b6b" stroke-width="2.2"/><path d="M1149 213.5 L1156 207.5 H1165 V213.5 Z" fill="#c6c6c6" stroke="#6b6b6b" stroke-width="1.4"/><rect x="1166" y="203.3" width="16" height="20.7" fill="#f5f5f5" stroke="#6b6b6b" stroke-width="2.1"/><rect x="1170" y="207" width="8" height="3.8" fill="#1a8ce8"/><path d="M1174 213.5 V220.5 M1170.5 217 H1178" stroke="#6b6b6b" stroke-width="1.8"/>
<g transform="translate(1217.5 190.7)" fill="none" stroke="#6e6e6e" stroke-width="2.2" stroke-linejoin="miter"><path d="M12.9 1.2 H29 L17 12.3 H0.8 Z" fill="#efefef" stroke-width="2.3"/><path d="M20.6 13.2 L29 6.8 M25 15 L29 12.6" stroke-width="2.3"/><path d="M0 20 L5 15.6 H7.5 L4 18 H17 V20 Z M0 26.8 L5 22.4 H7.5 L4 24.8 H13 V26.8 Z" fill="#6e6e6e" stroke="none"/></g>
<path d="M1242.6 208.6 L1243.9 213.1 L1247.7 210.2 L1246.1 214.7 L1250.8 214.5 L1246.9 217.2 L1250.8 219.9 L1246.1 219.7 L1247.7 224.2 L1243.9 221.3 L1242.6 225.8 L1241.3 221.3 L1237.5 224.2 L1239.1 219.7 L1234.4 219.9 L1238.3 217.2 L1234.4 214.5 L1239.1 214.7 L1237.5 210.2 L1241.3 213.1 Z" fill="#ffa500" />
<path d="M1261 198.5 H1276.5 L1278 200 L1279.5 198.5 H1294 V222.5 H1261 Z" fill="#e8eaee" stroke="#555a62" stroke-width="2.4"/><path d="M1277.8 200 V223" stroke="#8a8e95" stroke-width="1.6"/><path d="M1265 205.5 H1274 M1265 210 H1274 M1265 214.5 H1274 M1282 210 H1290 M1282 214.5 H1286" stroke="#777b82" stroke-width="1.8"/>
<path d="M1287.0 191.1 L1288.1 194.6 L1290.8 192.1 L1290.0 195.7 L1293.6 194.9 L1291.1 197.6 L1294.6 198.7 L1291.1 199.8 L1293.6 202.5 L1290.0 201.7 L1290.8 205.3 L1288.1 202.8 L1287.0 206.3 L1285.9 202.8 L1283.2 205.3 L1284.0 201.7 L1280.4 202.5 L1282.9 199.8 L1279.4 198.7 L1282.9 197.6 L1280.4 194.9 L1284.0 195.7 L1283.2 192.1 L1285.9 194.6 Z" fill="#e8431e" /><path d="M1287.0 194.2 L1288.6 197.1 L1291.5 198.7 L1288.6 200.3 L1287.0 203.2 L1285.4 200.3 L1282.5 198.7 L1285.4 197.1 Z" fill="#ffe070" />
<g transform="translate(1302 191.2)" fill="none" stroke="#6e6e6e" stroke-width="2.2" stroke-linejoin="miter"><path d="M12.9 1.2 H29 L17 12.3 H0.8 Z" fill="#efefef" stroke-width="2.3"/><path d="M20.6 13.2 L29 6.8 M25 15 L29 12.6" stroke-width="2.3"/><path d="M0 20 L5 15.6 H7.5 L4 18 H17 V20 Z M0 26.8 L5 22.4 H7.5 L4 24.8 H13 V26.8 Z" fill="#6e6e6e" stroke="none"/></g>
<g stroke="#4ab3c2" stroke-width="1.9" fill="none"><path d="M1326.9 227.6 L1326.9 207.6"/><path d="M1318.2 222.6 L1335.6 212.6"/><path d="M1318.2 212.6 L1335.6 222.6"/><path d="M1326.9 224.6 L1329.2 226.5"/><path d="M1326.9 224.6 L1324.6 226.5"/><path d="M1320.8 221.1 L1320.3 224.1"/><path d="M1320.8 221.1 L1318.0 220.1"/><path d="M1320.8 214.1 L1318.0 215.1"/><path d="M1320.8 214.1 L1320.3 211.1"/><path d="M1326.9 210.6 L1324.6 208.7"/><path d="M1326.9 210.6 L1329.2 208.7"/><path d="M1333.0 214.1 L1333.5 211.1"/><path d="M1333.0 214.1 L1335.8 215.1"/><path d="M1333.0 221.1 L1335.8 220.1"/><path d="M1333.0 221.1 L1333.5 224.1"/></g>
<g transform="translate(1344.3 191.2)" fill="none" stroke="#6e6e6e" stroke-width="2.2" stroke-linejoin="miter"><path d="M12.9 1.2 H29 L17 12.3 H0.8 Z" fill="#efefef" stroke-width="2.3"/><path d="M20.6 13.2 L29 6.8 M25 15 L29 12.6" stroke-width="2.3"/><path d="M0 20 L5 15.6 H7.5 L4 18 H17 V20 Z M0 26.8 L5 22.4 H7.5 L4 24.8 H13 V26.8 Z" fill="#6e6e6e" stroke="none"/></g>
<path d="M1365 212.5 L1378 225.5 M1378 212.5 L1365 225.5" stroke="#f03434" stroke-width="4.2"/>
<g transform="translate(1386.6 193.3)" fill="none" stroke="#6e6e6e" stroke-width="2.2" stroke-linejoin="miter"><path d="M12.9 1.2 H29 L17 12.3 H0.8 Z" fill="#efefef" stroke-width="2.3"/><path d="M20.6 13.2 L29 6.8 M25 15 L29 12.6" stroke-width="2.3"/><path d="M0 20 L5 15.6 H7.5 L4 18 H17 V20 Z M0 26.8 L5 22.4 H7.5 L4 24.8 H13 V26.8 Z" fill="#6e6e6e" stroke="none"/></g>
<path d="M1405 217 L1410.5 222.5 L1420.5 212.5" fill="none" stroke="#26a84c" stroke-width="4.2"/>
<rect x="786" y="239" width="325" height="566" fill="#f5f5f5" stroke="#d6d6d6" stroke-width="2"/>
<rect x="787" y="285" width="323" height="3" fill="#dadada"/>
<rect x="787" y="756" width="323" height="3" fill="#dadada"/>
<text x="791.8" y="271.7" font-size="27" fill="#3a3a3a" textLength="71.7" lengthAdjust="spacingAndGlyphs" >Filters</text>
<path d="M1082.5 252.2 L1074.0 260.7 L1082.5 269.2 M1096.0 252.2 L1087.5 260.7 L1096.0 269.2" fill="none" stroke="#5c5c5c" stroke-width="3.6"/>
<path d="M1082.5 772.3 L1074.0 780.8 L1082.5 789.3 M1096.0 772.3 L1087.5 780.8 L1096.0 789.3" fill="none" stroke="#5c5c5c" stroke-width="3.6"/>
<rect x="797.5" y="309" width="19" height="18.5" rx="1.5" fill="#ececec" stroke="#a0a0a0" stroke-width="1.2"/><path d="M801.6 318 H812" stroke="#4a5cb0" stroke-width="1.8"/>
<path d="M817 318.2 H832 M850.5 337 V358.6 H875" fill="none" stroke="#777" stroke-width="1" stroke-dasharray="1.2 1.2"/>
<rect x="871" y="298" width="33" height="40" fill="#cde8f7"/>
<g transform="translate(837.5 304.5) scale(0.86)" fill="none" stroke="#6e6e6e" stroke-width="2.2"><path d="M12.9 1.2 H29 L17 12.3 H0.8 Z" fill="#efefef"/><path d="M20.6 13.2 L29 6.8"/><path d="M0 20 L5 15.6 H7.5 L4 18 H17 V20 Z M0 26.8 L5 22.4 H7.5 L4 24.8 H13 V26.8 Z" fill="#6e6e6e" stroke="none"/></g>
<path d="M849 325 L853 329 L861 321" fill="none" stroke="#26a84c" stroke-width="3.2"/>
<text x="871.3" y="329.5" font-size="27" fill="#3a3a3a" textLength="29.6" lengthAdjust="spacingAndGlyphs" >All</text>
<path d="M880.5 365 V347.5 H889 L892 350.5 H903.5 V357" fill="none" stroke="#676767" stroke-width="2"/><path d="M880.5 351.5 H891" stroke="#676767" stroke-width="1.8"/><path d="M880.5 365 H893" stroke="#676767" stroke-width="2"/><path d="M892 357.5 H906 L900.5 363 V369.5 L897.5 371 V363 Z" fill="#f2f2f2" stroke="#676767" stroke-width="1.8"/>
<text x="915.0" y="369.0" font-size="27" fill="#3a3a3a" textLength="179.0" lengthAdjust="spacingAndGlyphs" >All Used Layers</text>
<rect x="796.2" y="767.4" width="26.6" height="26.4" fill="#ffffff" stroke="#444" stroke-width="2"/>
<text x="828.7" y="790.1" font-size="27" fill="#3a3a3a" textLength="129.9" lengthAdjust="spacingAndGlyphs" >Invert filter</text>
<rect x="1122" y="238" width="742" height="52" fill="#eeeeee"/>
<rect x="1159.5" y="238" width="2" height="52" fill="#d7d7d7"/>
<rect x="1574.5" y="238" width="2" height="52" fill="#d7d7d7"/>
<rect x="1615" y="238" width="2" height="52" fill="#d7d7d7"/>
<rect x="1655.5" y="238" width="2" height="52" fill="#d7d7d7"/>
<rect x="1696" y="238" width="2" height="52" fill="#d7d7d7"/>
<rect x="1804.5" y="238" width="2" height="52" fill="#d7d7d7"/>
<text x="1130.6" y="274.7" font-size="27" fill="#3a3a3a" textLength="27.8" lengthAdjust="spacingAndGlyphs" >S..</text>
<text x="1170.8" y="274.7" font-size="27" fill="#3a3a3a" textLength="72.0" lengthAdjust="spacingAndGlyphs" >Name</text>
<path d="M1512 269 L1520 260 L1528 269 Z" fill="#5e5e5e"/>
<text x="1544.7" y="274.7" font-size="27" fill="#3a3a3a" textLength="28.3" lengthAdjust="spacingAndGlyphs" >O.</text>
<text x="1585.1" y="274.7" font-size="27" fill="#3a3a3a" textLength="27.2" lengthAdjust="spacingAndGlyphs" >F..</text>
<text x="1625.0" y="274.7" font-size="27" fill="#3a3a3a" textLength="27.2" lengthAdjust="spacingAndGlyphs" >L..</text>
<text x="1666.0" y="274.7" font-size="27" fill="#3a3a3a" textLength="29.4" lengthAdjust="spacingAndGlyphs" >P..</text>
<text x="1706.2" y="274.7" font-size="27" fill="#3a3a3a" textLength="65.8" lengthAdjust="spacingAndGlyphs" >Color</text>
<text x="1813.2" y="274.7" font-size="27" fill="#3a3a3a" textLength="64.3" lengthAdjust="spacingAndGlyphs" >Line</text>
<rect x="1531.5" y="238" width="4" height="530" fill="#d2d2d2"/>
<clipPath id="rc"><rect x="1122" y="290" width="742" height="477.3"/></clipPath><g clip-path="url(#rc)">
<path d="M1133.5 304.1 H1158 L1150.5 316.8 H1126 Z" fill="#6db1e6" stroke="#4a8fc6" stroke-width="1.3"/>
<text x="1170.2" y="320.3" font-size="27" fill="#3a3a3a" textLength="104.6" lengthAdjust="spacingAndGlyphs" >Abeibara</text>
<g transform="translate(0 0.00)"><path d="M1550 315 Q1545.5 310 1545.5 306.5 Q1545.5 296.8 1555.7 296.8 Q1566 296.8 1566 306.5 Q1566 310 1561.5 315 Z" fill="#ffa500" stroke="#e09000" stroke-width="1.2"/><path d="M1552 317 H1559.2 V321.5 L1555.6 323.8 L1552 321.5 Z" fill="#808080"/><circle cx="1596.7" cy="310.2" r="7.4" fill="#ffa500" stroke="#f09a00" stroke-width="1"/>
<path d="M1607.0 310.2 L1611.2 310.2 M1604.0 317.5 L1607.0 320.5 M1596.7 320.5 L1596.7 324.7 M1589.4 317.5 L1586.4 320.5 M1586.4 310.2 L1582.2 310.2 M1589.4 302.9 L1586.4 299.9 M1596.7 299.9 L1596.7 295.7 M1604.0 302.9 L1607.0 299.9 " stroke="#ffa500" stroke-width="2.2"/>
<rect x="1625" y="307" width="20.3" height="15.6" fill="#ffa500" stroke="#f09c00" stroke-width="1"/><rect x="1634.3" y="311.5" width="2" height="6.3" fill="#fff"/><path d="M1639.7 307 V302.5 Q1639.7 298.5 1644.5 298.5 Q1649 298.5 1649 302.5 V306.5" fill="none" stroke="#ffa500" stroke-width="2.4"/><rect x="1666.2" y="303.2" width="25" height="15.8" fill="#f5f5f5" stroke="#777" stroke-width="2"/><path d="M1667.5 310 H1690" stroke="#cfcfcf" stroke-width="2"/><rect x="1670.4" y="298.2" width="15.8" height="9.2" fill="#fff" stroke="#777" stroke-width="2"/><rect x="1670.4" y="313.9" width="15.8" height="9" fill="#fff" stroke="#777" stroke-width="2"/><rect x="1673.8" y="315.2" width="9" height="4" fill="#60ace2"/><rect x="1706" y="296.9" width="25.6" height="25.6" fill="#000" stroke="#4a4a4a" stroke-width="1.2"/></g>
<text x="1742.7" y="320.3" font-size="27" fill="#3a3a3a" textLength="54.8" lengthAdjust="spacingAndGlyphs" >wh...</text>
<text x="1812.2" y="320.3" font-size="27" fill="#3a3a3a" textLength="55.8" lengthAdjust="spacingAndGlyphs" >Con</text>
<path d="M1133.5 344.6 H1158 L1150.5 357.3 H1126 Z" fill="#6db1e6" stroke="#4a8fc6" stroke-width="1.3"/>
<text x="1170.2" y="360.8" font-size="27" fill="#3a3a3a" textLength="84.9" lengthAdjust="spacingAndGlyphs" >Abiyou</text>
<g transform="translate(0 40.49)"><path d="M1550 315 Q1545.5 310 1545.5 306.5 Q1545.5 296.8 1555.7 296.8 Q1566 296.8 1566 306.5 Q1566 310 1561.5 315 Z" fill="#ffa500" stroke="#e09000" stroke-width="1.2"/><path d="M1552 317 H1559.2 V321.5 L1555.6 323.8 L1552 321.5 Z" fill="#808080"/><circle cx="1596.7" cy="310.2" r="7.4" fill="#ffa500" stroke="#f09a00" stroke-width="1"/>
<path d="M1607.0 310.2 L1611.2 310.2 M1604.0 317.5 L1607.0 320.5 M1596.7 320.5 L1596.7 324.7 M1589.4 317.5 L1586.4 320.5 M1586.4 310.2 L1582.2 310.2 M1589.4 302.9 L1586.4 299.9 M1596.7 299.9 L1596.7 295.7 M1604.0 302.9 L1607.0 299.9 " stroke="#ffa500" stroke-width="2.2"/>
<rect x="1625" y="307" width="20.3" height="15.6" fill="#ffa500" stroke="#f09c00" stroke-width="1"/><rect x="1634.3" y="311.5" width="2" height="6.3" fill="#fff"/><path d="M1639.7 307 V302.5 Q1639.7 298.5 1644.5 298.5 Q1649 298.5 1649 302.5 V306.5" fill="none" stroke="#ffa500" stroke-width="2.4"/><rect x="1666.2" y="303.2" width="25" height="15.8" fill="#f5f5f5" stroke="#777" stroke-width="2"/><path d="M1667.5 310 H1690" stroke="#cfcfcf" stroke-width="2"/><rect x="1670.4" y="298.2" width="15.8" height="9.2" fill="#fff" stroke="#777" stroke-width="2"/><rect x="1670.4" y="313.9" width="15.8" height="9" fill="#fff" stroke="#777" stroke-width="2"/><rect x="1673.8" y="315.2" width="9" height="4" fill="#60ace2"/><rect x="1706" y="296.9" width="25.6" height="25.6" fill="#000" stroke="#4a4a4a" stroke-width="1.2"/></g>
<text x="1742.7" y="360.8" font-size="27" fill="#3a3a3a" textLength="54.8" lengthAdjust="spacingAndGlyphs" >wh...</text>
<text x="1812.2" y="360.8" font-size="27" fill="#3a3a3a" textLength="55.8" lengthAdjust="spacingAndGlyphs" >Con</text>
<path d="M1133.5 385.1 H1158 L1150.5 397.8 H1126 Z" fill="#6db1e6" stroke="#4a8fc6" stroke-width="1.3"/>
<text x="1170.2" y="401.3" font-size="27" fill="#3a3a3a" textLength="103.9" lengthAdjust="spacingAndGlyphs" >Adjelhoc</text>
<g transform="translate(0 80.98)"><path d="M1550 315 Q1545.5 310 1545.5 306.5 Q1545.5 296.8 1555.7 296.8 Q1566 296.8 1566 306.5 Q1566 310 1561.5 315 Z" fill="#ffa500" stroke="#e09000" stroke-width="1.2"/><path d="M1552 317 H1559.2 V321.5 L1555.6 323.8 L1552 321.5 Z" fill="#808080"/><circle cx="1596.7" cy="310.2" r="7.4" fill="#ffa500" stroke="#f09a00" stroke-width="1"/>
<path d="M1607.0 310.2 L1611.2 310.2 M1604.0 317.5 L1607.0 320.5 M1596.7 320.5 L1596.7 324.7 M1589.4 317.5 L1586.4 320.5 M1586.4 310.2 L1582.2 310.2 M1589.4 302.9 L1586.4 299.9 M1596.7 299.9 L1596.7 295.7 M1604.0 302.9 L1607.0 299.9 " stroke="#ffa500" stroke-width="2.2"/>
<rect x="1625" y="307" width="20.3" height="15.6" fill="#ffa500" stroke="#f09c00" stroke-width="1"/><rect x="1634.3" y="311.5" width="2" height="6.3" fill="#fff"/><path d="M1639.7 307 V302.5 Q1639.7 298.5 1644.5 298.5 Q1649 298.5 1649 302.5 V306.5" fill="none" stroke="#ffa500" stroke-width="2.4"/><rect x="1666.2" y="303.2" width="25" height="15.8" fill="#f5f5f5" stroke="#777" stroke-width="2"/><path d="M1667.5 310 H1690" stroke="#cfcfcf" stroke-width="2"/><rect x="1670.4" y="298.2" width="15.8" height="9.2" fill="#fff" stroke="#777" stroke-width="2"/><rect x="1670.4" y="313.9" width="15.8" height="9" fill="#fff" stroke="#777" stroke-width="2"/><rect x="1673.8" y="315.2" width="9" height="4" fill="#60ace2"/><rect x="1706" y="296.9" width="25.6" height="25.6" fill="#000" stroke="#4a4a4a" stroke-width="1.2"/></g>
<text x="1742.7" y="401.3" font-size="27" fill="#3a3a3a" textLength="54.8" lengthAdjust="spacingAndGlyphs" >wh...</text>
<text x="1812.2" y="401.3" font-size="27" fill="#3a3a3a" textLength="55.8" lengthAdjust="spacingAndGlyphs" >Con</text>
<path d="M1133.5 425.6 H1158 L1150.5 438.3 H1126 Z" fill="#6db1e6" stroke="#4a8fc6" stroke-width="1.3"/>
<text x="1170.2" y="441.8" font-size="27" fill="#3a3a3a" textLength="59.0" lengthAdjust="spacingAndGlyphs" >Aglal</text>
<g transform="translate(0 121.47)"><path d="M1550 315 Q1545.5 310 1545.5 306.5 Q1545.5 296.8 1555.7 296.8 Q1566 296.8 1566 306.5 Q1566 310 1561.5 315 Z" fill="#ffa500" stroke="#e09000" stroke-width="1.2"/><path d="M1552 317 H1559.2 V321.5 L1555.6 323.8 L1552 321.5 Z" fill="#808080"/><circle cx="1596.7" cy="310.2" r="7.4" fill="#ffa500" stroke="#f09a00" stroke-width="1"/>
<path d="M1607.0 310.2 L1611.2 310.2 M1604.0 317.5 L1607.0 320.5 M1596.7 320.5 L1596.7 324.7 M1589.4 317.5 L1586.4 320.5 M1586.4 310.2 L1582.2 310.2 M1589.4 302.9 L1586.4 299.9 M1596.7 299.9 L1596.7 295.7 M1604.0 302.9 L1607.0 299.9 " stroke="#ffa500" stroke-width="2.2"/>
<rect x="1625" y="307" width="20.3" height="15.6" fill="#ffa500" stroke="#f09c00" stroke-width="1"/><rect x="1634.3" y="311.5" width="2" height="6.3" fill="#fff"/><path d="M1639.7 307 V302.5 Q1639.7 298.5 1644.5 298.5 Q1649 298.5 1649 302.5 V306.5" fill="none" stroke="#ffa500" stroke-width="2.4"/><rect x="1666.2" y="303.2" width="25" height="15.8" fill="#f5f5f5" stroke="#777" stroke-width="2"/><path d="M1667.5 310 H1690" stroke="#cfcfcf" stroke-width="2"/><rect x="1670.4" y="298.2" width="15.8" height="9.2" fill="#fff" stroke="#777" stroke-width="2"/><rect x="1670.4" y="313.9" width="15.8" height="9" fill="#fff" stroke="#777" stroke-width="2"/><rect x="1673.8" y="315.2" width="9" height="4" fill="#60ace2"/><rect x="1706" y="296.9" width="25.6" height="25.6" fill="#000" stroke="#4a4a4a" stroke-width="1.2"/></g>
<text x="1742.7" y="441.8" font-size="27" fill="#3a3a3a" textLength="54.8" lengthAdjust="spacingAndGlyphs" >wh...</text>
<text x="1812.2" y="441.8" font-size="27" fill="#3a3a3a" textLength="55.8" lengthAdjust="spacingAndGlyphs" >Con</text>
<path d="M1133.5 466.1 H1158 L1150.5 478.8 H1126 Z" fill="#6db1e6" stroke="#4a8fc6" stroke-width="1.3"/>
<text x="1170.2" y="482.3" font-size="27" fill="#3a3a3a" textLength="143.3" lengthAdjust="spacingAndGlyphs" >Almoustarat</text>
<g transform="translate(0 161.96)"><path d="M1550 315 Q1545.5 310 1545.5 306.5 Q1545.5 296.8 1555.7 296.8 Q1566 296.8 1566 306.5 Q1566 310 1561.5 315 Z" fill="#ffa500" stroke="#e09000" stroke-width="1.2"/><path d="M1552 317 H1559.2 V321.5 L1555.6 323.8 L1552 321.5 Z" fill="#808080"/><circle cx="1596.7" cy="310.2" r="7.4" fill="#ffa500" stroke="#f09a00" stroke-width="1"/>
<path d="M1607.0 310.2 L1611.2 310.2 M1604.0 317.5 L1607.0 320.5 M1596.7 320.5 L1596.7 324.7 M1589.4 317.5 L1586.4 320.5 M1586.4 310.2 L1582.2 310.2 M1589.4 302.9 L1586.4 299.9 M1596.7 299.9 L1596.7 295.7 M1604.0 302.9 L1607.0 299.9 " stroke="#ffa500" stroke-width="2.2"/>
<rect x="1625" y="307" width="20.3" height="15.6" fill="#ffa500" stroke="#f09c00" stroke-width="1"/><rect x="1634.3" y="311.5" width="2" height="6.3" fill="#fff"/><path d="M1639.7 307 V302.5 Q1639.7 298.5 1644.5 298.5 Q1649 298.5 1649 302.5 V306.5" fill="none" stroke="#ffa500" stroke-width="2.4"/><rect x="1666.2" y="303.2" width="25" height="15.8" fill="#f5f5f5" stroke="#777" stroke-width="2"/><path d="M1667.5 310 H1690" stroke="#cfcfcf" stroke-width="2"/><rect x="1670.4" y="298.2" width="15.8" height="9.2" fill="#fff" stroke="#777" stroke-width="2"/><rect x="1670.4" y="313.9" width="15.8" height="9" fill="#fff" stroke="#777" stroke-width="2"/><rect x="1673.8" y="315.2" width="9" height="4" fill="#60ace2"/><rect x="1706" y="296.9" width="25.6" height="25.6" fill="#000" stroke="#4a4a4a" stroke-width="1.2"/></g>
<text x="1742.7" y="482.3" font-size="27" fill="#3a3a3a" textLength="54.8" lengthAdjust="spacingAndGlyphs" >wh...</text>
<text x="1812.2" y="482.3" font-size="27" fill="#3a3a3a" textLength="55.8" lengthAdjust="spacingAndGlyphs" >Con</text>
<path d="M1133.5 506.6 H1158 L1150.5 519.2 H1126 Z" fill="#6db1e6" stroke="#4a8fc6" stroke-width="1.3"/>
<text x="1170.2" y="522.8" font-size="27" fill="#3a3a3a" textLength="116.3" lengthAdjust="spacingAndGlyphs" >Ambidedi</text>
<g transform="translate(0 202.45)"><path d="M1550 315 Q1545.5 310 1545.5 306.5 Q1545.5 296.8 1555.7 296.8 Q1566 296.8 1566 306.5 Q1566 310 1561.5 315 Z" fill="#ffa500" stroke="#e09000" stroke-width="1.2"/><path d="M1552 317 H1559.2 V321.5 L1555.6 323.8 L1552 321.5 Z" fill="#808080"/><circle cx="1596.7" cy="310.2" r="7.4" fill="#ffa500" stroke="#f09a00" stroke-width="1"/>
<path d="M1607.0 310.2 L1611.2 310.2 M1604.0 317.5 L1607.0 320.5 M1596.7 320.5 L1596.7 324.7 M1589.4 317.5 L1586.4 320.5 M1586.4 310.2 L1582.2 310.2 M1589.4 302.9 L1586.4 299.9 M1596.7 299.9 L1596.7 295.7 M1604.0 302.9 L1607.0 299.9 " stroke="#ffa500" stroke-width="2.2"/>
<rect x="1625" y="307" width="20.3" height="15.6" fill="#ffa500" stroke="#f09c00" stroke-width="1"/><rect x="1634.3" y="311.5" width="2" height="6.3" fill="#fff"/><path d="M1639.7 307 V302.5 Q1639.7 298.5 1644.5 298.5 Q1649 298.5 1649 302.5 V306.5" fill="none" stroke="#ffa500" stroke-width="2.4"/><rect x="1666.2" y="303.2" width="25" height="15.8" fill="#f5f5f5" stroke="#777" stroke-width="2"/><path d="M1667.5 310 H1690" stroke="#cfcfcf" stroke-width="2"/><rect x="1670.4" y="298.2" width="15.8" height="9.2" fill="#fff" stroke="#777" stroke-width="2"/><rect x="1670.4" y="313.9" width="15.8" height="9" fill="#fff" stroke="#777" stroke-width="2"/><rect x="1673.8" y="315.2" width="9" height="4" fill="#60ace2"/><rect x="1706" y="296.9" width="25.6" height="25.6" fill="#000" stroke="#4a4a4a" stroke-width="1.2"/></g>
<text x="1742.7" y="522.8" font-size="27" fill="#3a3a3a" textLength="54.8" lengthAdjust="spacingAndGlyphs" >wh...</text>
<text x="1812.2" y="522.8" font-size="27" fill="#3a3a3a" textLength="55.8" lengthAdjust="spacingAndGlyphs" >Con</text>
<path d="M1133.5 547.0 H1158 L1150.5 559.7 H1126 Z" fill="#6db1e6" stroke="#4a8fc6" stroke-width="1.3"/>
<text x="1170.2" y="563.2" font-size="27" fill="#3a3a3a" textLength="78.7" lengthAdjust="spacingAndGlyphs" >Ambiri</text>
<g transform="translate(0 242.94)"><path d="M1550 315 Q1545.5 310 1545.5 306.5 Q1545.5 296.8 1555.7 296.8 Q1566 296.8 1566 306.5 Q1566 310 1561.5 315 Z" fill="#ffa500" stroke="#e09000" stroke-width="1.2"/><path d="M1552 317 H1559.2 V321.5 L1555.6 323.8 L1552 321.5 Z" fill="#808080"/><circle cx="1596.7" cy="310.2" r="7.4" fill="#ffa500" stroke="#f09a00" stroke-width="1"/>
<path d="M1607.0 310.2 L1611.2 310.2 M1604.0 317.5 L1607.0 320.5 M1596.7 320.5 L1596.7 324.7 M1589.4 317.5 L1586.4 320.5 M1586.4 310.2 L1582.2 310.2 M1589.4 302.9 L1586.4 299.9 M1596.7 299.9 L1596.7 295.7 M1604.0 302.9 L1607.0 299.9 " stroke="#ffa500" stroke-width="2.2"/>
<rect x="1625" y="307" width="20.3" height="15.6" fill="#ffa500" stroke="#f09c00" stroke-width="1"/><rect x="1634.3" y="311.5" width="2" height="6.3" fill="#fff"/><path d="M1639.7 307 V302.5 Q1639.7 298.5 1644.5 298.5 Q1649 298.5 1649 302.5 V306.5" fill="none" stroke="#ffa500" stroke-width="2.4"/><rect x="1666.2" y="303.2" width="25" height="15.8" fill="#f5f5f5" stroke="#777" stroke-width="2"/><path d="M1667.5 310 H1690" stroke="#cfcfcf" stroke-width="2"/><rect x="1670.4" y="298.2" width="15.8" height="9.2" fill="#fff" stroke="#777" stroke-width="2"/><rect x="1670.4" y="313.9" width="15.8" height="9" fill="#fff" stroke="#777" stroke-width="2"/><rect x="1673.8" y="315.2" width="9" height="4" fill="#60ace2"/><rect x="1706" y="296.9" width="25.6" height="25.6" fill="#000" stroke="#4a4a4a" stroke-width="1.2"/></g>
<text x="1742.7" y="563.2" font-size="27" fill="#3a3a3a" textLength="54.8" lengthAdjust="spacingAndGlyphs" >wh...</text>
<text x="1812.2" y="563.2" font-size="27" fill="#3a3a3a" textLength="55.8" lengthAdjust="spacingAndGlyphs" >Con</text>
<path d="M1133.5 587.5 H1158 L1150.5 600.2 H1126 Z" fill="#6db1e6" stroke="#4a8fc6" stroke-width="1.3"/>
<text x="1170.2" y="603.7" font-size="27" fill="#3a3a3a" textLength="213.1" lengthAdjust="spacingAndGlyphs" >Anderamboukane</text>
<g transform="translate(0 283.43)"><path d="M1550 315 Q1545.5 310 1545.5 306.5 Q1545.5 296.8 1555.7 296.8 Q1566 296.8 1566 306.5 Q1566 310 1561.5 315 Z" fill="#ffa500" stroke="#e09000" stroke-width="1.2"/><path d="M1552 317 H1559.2 V321.5 L1555.6 323.8 L1552 321.5 Z" fill="#808080"/><circle cx="1596.7" cy="310.2" r="7.4" fill="#ffa500" stroke="#f09a00" stroke-width="1"/>
<path d="M1607.0 310.2 L1611.2 310.2 M1604.0 317.5 L1607.0 320.5 M1596.7 320.5 L1596.7 324.7 M1589.4 317.5 L1586.4 320.5 M1586.4 310.2 L1582.2 310.2 M1589.4 302.9 L1586.4 299.9 M1596.7 299.9 L1596.7 295.7 M1604.0 302.9 L1607.0 299.9 " stroke="#ffa500" stroke-width="2.2"/>
<rect x="1625" y="307" width="20.3" height="15.6" fill="#ffa500" stroke="#f09c00" stroke-width="1"/><rect x="1634.3" y="311.5" width="2" height="6.3" fill="#fff"/><path d="M1639.7 307 V302.5 Q1639.7 298.5 1644.5 298.5 Q1649 298.5 1649 302.5 V306.5" fill="none" stroke="#ffa500" stroke-width="2.4"/><rect x="1666.2" y="303.2" width="25" height="15.8" fill="#f5f5f5" stroke="#777" stroke-width="2"/><path d="M1667.5 310 H1690" stroke="#cfcfcf" stroke-width="2"/><rect x="1670.4" y="298.2" width="15.8" height="9.2" fill="#fff" stroke="#777" stroke-width="2"/><rect x="1670.4" y="313.9" width="15.8" height="9" fill="#fff" stroke="#777" stroke-width="2"/><rect x="1673.8" y="315.2" width="9" height="4" fill="#60ace2"/><rect x="1706" y="296.9" width="25.6" height="25.6" fill="#000" stroke="#4a4a4a" stroke-width="1.2"/></g>
<text x="1742.7" y="603.7" font-size="27" fill="#3a3a3a" textLength="54.8" lengthAdjust="spacingAndGlyphs" >wh...</text>
<text x="1812.2" y="603.7" font-size="27" fill="#3a3a3a" textLength="55.8" lengthAdjust="spacingAndGlyphs" >Con</text>
<path d="M1133.5 628.0 H1158 L1150.5 640.7 H1126 Z" fill="#6db1e6" stroke="#4a8fc6" stroke-width="1.3"/>
<text x="1170.2" y="644.2" font-size="27" fill="#3a3a3a" textLength="69.5" lengthAdjust="spacingAndGlyphs" >Anefif</text>
<g transform="translate(0 323.92)"><path d="M1550 315 Q1545.5 310 1545.5 306.5 Q1545.5 296.8 1555.7 296.8 Q1566 296.8 1566 306.5 Q1566 310 1561.5 315 Z" fill="#ffa500" stroke="#e09000" stroke-width="1.2"/><path d="M1552 317 H1559.2 V321.5 L1555.6 323.8 L1552 321.5 Z" fill="#808080"/><circle cx="1596.7" cy="310.2" r="7.4" fill="#ffa500" stroke="#f09a00" stroke-width="1"/>
<path d="M1607.0 310.2 L1611.2 310.2 M1604.0 317.5 L1607.0 320.5 M1596.7 320.5 L1596.7 324.7 M1589.4 317.5 L1586.4 320.5 M1586.4 310.2 L1582.2 310.2 M1589.4 302.9 L1586.4 299.9 M1596.7 299.9 L1596.7 295.7 M1604.0 302.9 L1607.0 299.9 " stroke="#ffa500" stroke-width="2.2"/>
<rect x="1625" y="307" width="20.3" height="15.6" fill="#ffa500" stroke="#f09c00" stroke-width="1"/><rect x="1634.3" y="311.5" width="2" height="6.3" fill="#fff"/><path d="M1639.7 307 V302.5 Q1639.7 298.5 1644.5 298.5 Q1649 298.5 1649 302.5 V306.5" fill="none" stroke="#ffa500" stroke-width="2.4"/><rect x="1666.2" y="303.2" width="25" height="15.8" fill="#f5f5f5" stroke="#777" stroke-width="2"/><path d="M1667.5 310 H1690" stroke="#cfcfcf" stroke-width="2"/><rect x="1670.4" y="298.2" width="15.8" height="9.2" fill="#fff" stroke="#777" stroke-width="2"/><rect x="1670.4" y="313.9" width="15.8" height="9" fill="#fff" stroke="#777" stroke-width="2"/><rect x="1673.8" y="315.2" width="9" height="4" fill="#60ace2"/><rect x="1706" y="296.9" width="25.6" height="25.6" fill="#000" stroke="#4a4a4a" stroke-width="1.2"/></g>
<text x="1742.7" y="644.2" font-size="27" fill="#3a3a3a" textLength="54.8" lengthAdjust="spacingAndGlyphs" >wh...</text>
<text x="1812.2" y="644.2" font-size="27" fill="#3a3a3a" textLength="55.8" lengthAdjust="spacingAndGlyphs" >Con</text>
<path d="M1133.5 668.5 H1158 L1150.5 681.2 H1126 Z" fill="#6db1e6" stroke="#4a8fc6" stroke-width="1.3"/>
<text x="1170.2" y="684.7" font-size="27" fill="#3a3a3a" textLength="107.5" lengthAdjust="spacingAndGlyphs" >Ansongo</text>
<g transform="translate(0 364.41)"><path d="M1550 315 Q1545.5 310 1545.5 306.5 Q1545.5 296.8 1555.7 296.8 Q1566 296.8 1566 306.5 Q1566 310 1561.5 315 Z" fill="#ffa500" stroke="#e09000" stroke-width="1.2"/><path d="M1552 317 H1559.2 V321.5 L1555.6 323.8 L1552 321.5 Z" fill="#808080"/><circle cx="1596.7" cy="310.2" r="7.4" fill="#ffa500" stroke="#f09a00" stroke-width="1"/>
<path d="M1607.0 310.2 L1611.2 310.2 M1604.0 317.5 L1607.0 320.5 M1596.7 320.5 L1596.7 324.7 M1589.4 317.5 L1586.4 320.5 M1586.4 310.2 L1582.2 310.2 M1589.4 302.9 L1586.4 299.9 M1596.7 299.9 L1596.7 295.7 M1604.0 302.9 L1607.0 299.9 " stroke="#ffa500" stroke-width="2.2"/>
<rect x="1625" y="307" width="20.3" height="15.6" fill="#ffa500" stroke="#f09c00" stroke-width="1"/><rect x="1634.3" y="311.5" width="2" height="6.3" fill="#fff"/><path d="M1639.7 307 V302.5 Q1639.7 298.5 1644.5 298.5 Q1649 298.5 1649 302.5 V306.5" fill="none" stroke="#ffa500" stroke-width="2.4"/><rect x="1666.2" y="303.2" width="25" height="15.8" fill="#f5f5f5" stroke="#777" stroke-width="2"/><path d="M1667.5 310 H1690" stroke="#cfcfcf" stroke-width="2"/><rect x="1670.4" y="298.2" width="15.8" height="9.2" fill="#fff" stroke="#777" stroke-width="2"/><rect x="1670.4" y="313.9" width="15.8" height="9" fill="#fff" stroke="#777" stroke-width="2"/><rect x="1673.8" y="315.2" width="9" height="4" fill="#60ace2"/><rect x="1706" y="296.9" width="25.6" height="25.6" fill="#000" stroke="#4a4a4a" stroke-width="1.2"/></g>
<text x="1742.7" y="684.7" font-size="27" fill="#3a3a3a" textLength="54.8" lengthAdjust="spacingAndGlyphs" >wh...</text>
<text x="1812.2" y="684.7" font-size="27" fill="#3a3a3a" textLength="55.8" lengthAdjust="spacingAndGlyphs" >Con</text>
<path d="M1133.5 709.0 H1158 L1150.5 721.7 H1126 Z" fill="#6db1e6" stroke="#4a8fc6" stroke-width="1.3"/>
<text x="1170.2" y="725.2" font-size="27" fill="#3a3a3a" textLength="89.3" lengthAdjust="spacingAndGlyphs" >Aourou</text>
<g transform="translate(0 404.90)"><path d="M1550 315 Q1545.5 310 1545.5 306.5 Q1545.5 296.8 1555.7 296.8 Q1566 296.8 1566 306.5 Q1566 310 1561.5 315 Z" fill="#ffa500" stroke="#e09000" stroke-width="1.2"/><path d="M1552 317 H1559.2 V321.5 L1555.6 323.8 L1552 321.5 Z" fill="#808080"/><circle cx="1596.7" cy="310.2" r="7.4" fill="#ffa500" stroke="#f09a00" stroke-width="1"/>
<path d="M1607.0 310.2 L1611.2 310.2 M1604.0 317.5 L1607.0 320.5 M1596.7 320.5 L1596.7 324.7 M1589.4 317.5 L1586.4 320.5 M1586.4 310.2 L1582.2 310.2 M1589.4 302.9 L1586.4 299.9 M1596.7 299.9 L1596.7 295.7 M1604.0 302.9 L1607.0 299.9 " stroke="#ffa500" stroke-width="2.2"/>
<rect x="1625" y="307" width="20.3" height="15.6" fill="#ffa500" stroke="#f09c00" stroke-width="1"/><rect x="1634.3" y="311.5" width="2" height="6.3" fill="#fff"/><path d="M1639.7 307 V302.5 Q1639.7 298.5 1644.5 298.5 Q1649 298.5 1649 302.5 V306.5" fill="none" stroke="#ffa500" stroke-width="2.4"/><rect x="1666.2" y="303.2" width="25" height="15.8" fill="#f5f5f5" stroke="#777" stroke-width="2"/><path d="M1667.5 310 H1690" stroke="#cfcfcf" stroke-width="2"/><rect x="1670.4" y="298.2" width="15.8" height="9.2" fill="#fff" stroke="#777" stroke-width="2"/><rect x="1670.4" y="313.9" width="15.8" height="9" fill="#fff" stroke="#777" stroke-width="2"/><rect x="1673.8" y="315.2" width="9" height="4" fill="#60ace2"/><rect x="1706" y="296.9" width="25.6" height="25.6" fill="#000" stroke="#4a4a4a" stroke-width="1.2"/></g>
<text x="1742.7" y="725.2" font-size="27" fill="#3a3a3a" textLength="54.8" lengthAdjust="spacingAndGlyphs" >wh...</text>
<text x="1812.2" y="725.2" font-size="27" fill="#3a3a3a" textLength="55.8" lengthAdjust="spacingAndGlyphs" >Con</text>
<path d="M1133.5 749.5 H1158 L1150.5 762.2 H1126 Z" fill="#6db1e6" stroke="#4a8fc6" stroke-width="1.3"/>
<text x="1168.1" y="765.7" font-size="27" fill="#3a3a3a" textLength="120.7" lengthAdjust="spacingAndGlyphs" >Bafoulabe</text>
<g transform="translate(0 445.39)"><path d="M1550 315 Q1545.5 310 1545.5 306.5 Q1545.5 296.8 1555.7 296.8 Q1566 296.8 1566 306.5 Q1566 310 1561.5 315 Z" fill="#ffa500" stroke="#e09000" stroke-width="1.2"/><path d="M1552 317 H1559.2 V321.5 L1555.6 323.8 L1552 321.5 Z" fill="#808080"/><circle cx="1596.7" cy="310.2" r="7.4" fill="#ffa500" stroke="#f09a00" stroke-width="1"/>
<path d="M1607.0 310.2 L1611.2 310.2 M1604.0 317.5 L1607.0 320.5 M1596.7 320.5 L1596.7 324.7 M1589.4 317.5 L1586.4 320.5 M1586.4 310.2 L1582.2 310.2 M1589.4 302.9 L1586.4 299.9 M1596.7 299.9 L1596.7 295.7 M1604.0 302.9 L1607.0 299.9 " stroke="#ffa500" stroke-width="2.2"/>
<rect x="1625" y="307" width="20.3" height="15.6" fill="#ffa500" stroke="#f09c00" stroke-width="1"/><rect x="1634.3" y="311.5" width="2" height="6.3" fill="#fff"/><path d="M1639.7 307 V302.5 Q1639.7 298.5 1644.5 298.5 Q1649 298.5 1649 302.5 V306.5" fill="none" stroke="#ffa500" stroke-width="2.4"/><rect x="1666.2" y="303.2" width="25" height="15.8" fill="#f5f5f5" stroke="#777" stroke-width="2"/><path d="M1667.5 310 H1690" stroke="#cfcfcf" stroke-width="2"/><rect x="1670.4" y="298.2" width="15.8" height="9.2" fill="#fff" stroke="#777" stroke-width="2"/><rect x="1670.4" y="313.9" width="15.8" height="9" fill="#fff" stroke="#777" stroke-width="2"/><rect x="1673.8" y="315.2" width="9" height="4" fill="#60ace2"/><rect x="1706" y="296.9" width="25.6" height="25.6" fill="#000" stroke="#4a4a4a" stroke-width="1.2"/></g>
<text x="1742.7" y="765.7" font-size="27" fill="#3a3a3a" textLength="54.8" lengthAdjust="spacingAndGlyphs" >wh...</text>
<text x="1812.2" y="765.7" font-size="27" fill="#3a3a3a" textLength="55.8" lengthAdjust="spacingAndGlyphs" >Con</text>
</g>
<rect x="1122" y="767.3" width="742" height="38.4" fill="#f1f1f1"/>
<rect x="1160.7" y="767.3" width="454" height="38.4" fill="#cccccc"/>
<path d="M1146.5 778.5 L1137 786.5 L1146.5 794.5" fill="none" stroke="#5e5e5e" stroke-width="5"/>
<text x="793.3" y="872.0" font-size="27" fill="#3a3a3a" textLength="501.0" lengthAdjust="spacingAndGlyphs" >All: 505 layers displayed of 505 total layers</text>
</svg></body></html>
